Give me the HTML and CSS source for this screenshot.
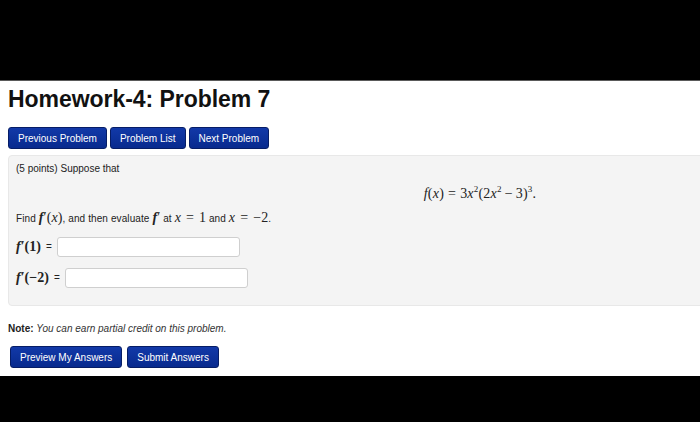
FILE: index.html
```
<!DOCTYPE html>
<html>
<head>
<meta charset="utf-8">
<link rel="stylesheet" href="styles.css">
</head>
<body>
<div class="topbar"></div>
<div class="page">
  <h1 class="title">Homework-4: Problem 7</h1>
  <div class="nav">
    <button class="btn">Previous Problem</button>
    <button class="btn">Problem List</button>
    <button class="btn">Next Problem</button>
  </div>
  <div class="problem">
    <p class="intro">(5 points) Suppose that</p>
    <p class="display"><span class="m">f</span>(<span class="m">x</span>)<span class="eq">=</span>3<span class="m">x</span><sup>2</sup>(2<span class="m">x</span><sup>2</sup><span class="op">−</span>3)<sup>3</sup>.</p>
    <p class="find">Find <span class="math"><span class="m b">f</span>′(<span class="m">x</span>)</span>, and then evaluate <span class="math"><span class="m b">f</span>′</span> at <span class="math"><span class="m">x</span><span class="eq">=</span>1</span> and <span class="math"><span class="m">x</span><span class="eq">=</span>−2</span>.</p>
    <div class="answer a1"><span class="math lbl"><span class="m">f</span>′(1)</span> = <input class="field" type="text"></div>
    <div class="answer a2"><span class="math lbl"><span class="m">f</span>′(−2)</span> = <input class="field" type="text"></div>
  </div>
  <p class="note"><b>Note:</b> <i>You can earn partial credit on this problem.</i></p>
  <div class="submit">
    <button class="btn big">Preview My Answers</button>
    <button class="btn big">Submit Answers</button>
  </div>
</div>
<div class="bottombar"></div>
</body>
</html>
```
FILE: styles.css
```
html, body {
  margin: 0;
  padding: 0;
  background: #000;
  overflow: hidden;
  width: 700px;
  height: 422px;
}
body {
  font-family: "Liberation Sans", Arial, sans-serif;
  color: #222;
}
.topbar {
  height: 80px;
  background: #000;
  border-bottom: 1px solid #5a5a5a;
}
.page {
  background: #fff;
  height: 295px;
  padding: 5px 0 0 8px;
  box-sizing: border-box;
  overflow: hidden;
}
.title {
  margin: 0;
  font-size: 23px;
  line-height: 27px;
  font-weight: bold;
  color: #111;
  letter-spacing: -0.05px;
}
.nav {
  display: flex;
  gap: 3px;
  margin-top: 14px;
}
.btn {
  font-family: "Liberation Sans", Arial, sans-serif;
  font-size: 10px;
  color: #fff;
  background: linear-gradient(#1239a8, #082a8e);
  border: 1px solid #061d66;
  border-radius: 3px;
  height: 22px;
  padding: 0 9px;
  margin: 0;
}
.problem {
  margin-top: 6px;
  width: 944px;
  height: 151px;
  box-sizing: border-box;
  background: #f4f4f4;
  border: 1px solid #e8e8e8;
  border-radius: 4px;
  padding: 6px 7px 0 7px;
  font-size: 10px;
}
.problem p { margin: 0; }
.intro {
  line-height: 14px;
}
.display {
  text-align: center;
  font-family: "Liberation Serif", "Times New Roman", serif;
  font-size: 14px;
  line-height: 16px;
  margin-top: 10px !important;
  letter-spacing: 0.2px;
}
.display sup, .math sup { font-size: 9px; line-height: 0; }
.eq { margin: 0 4px; }
.op { margin: 0 3px; }
.m { font-style: italic; }
.b { font-weight: bold; }
.math {
  font-family: "Liberation Serif", "Times New Roman", serif;
  font-size: 14px;
}
.find {
  margin-top: 8px !important;
  line-height: 16px;
  letter-spacing: 0.1px;
}
.find .eq { margin: 0 5px; }
.answer {
  display: flex;
  align-items: center;
  gap: 3px;
  height: 21px;
}
.a1 { margin-top: 9px; }
.a2 { margin-top: 10px; }
.lbl {
  margin-right: 2px;
  font-weight: bold;
  font-size: 14px;
}
.field {
  width: 183px;
  height: 20px;
  box-sizing: border-box;
  border: 1px solid #cfcfcf;
  border-radius: 3px;
  background: #fff;
  margin: 0 0 0 2px;
  padding: 0;
}
.note {
  margin: 16px 0 0 0;
  font-size: 10px;
  line-height: 14px;
  color: #222;
}
.note i { color: #333; }
.submit {
  display: flex;
  gap: 5px;
  margin-top: 10px;
  padding-left: 2px;
}
.big {
  font-size: 10px;
  padding: 0 9px;
}
.bottombar {
  height: 46px;
  background: #000;
}
```
